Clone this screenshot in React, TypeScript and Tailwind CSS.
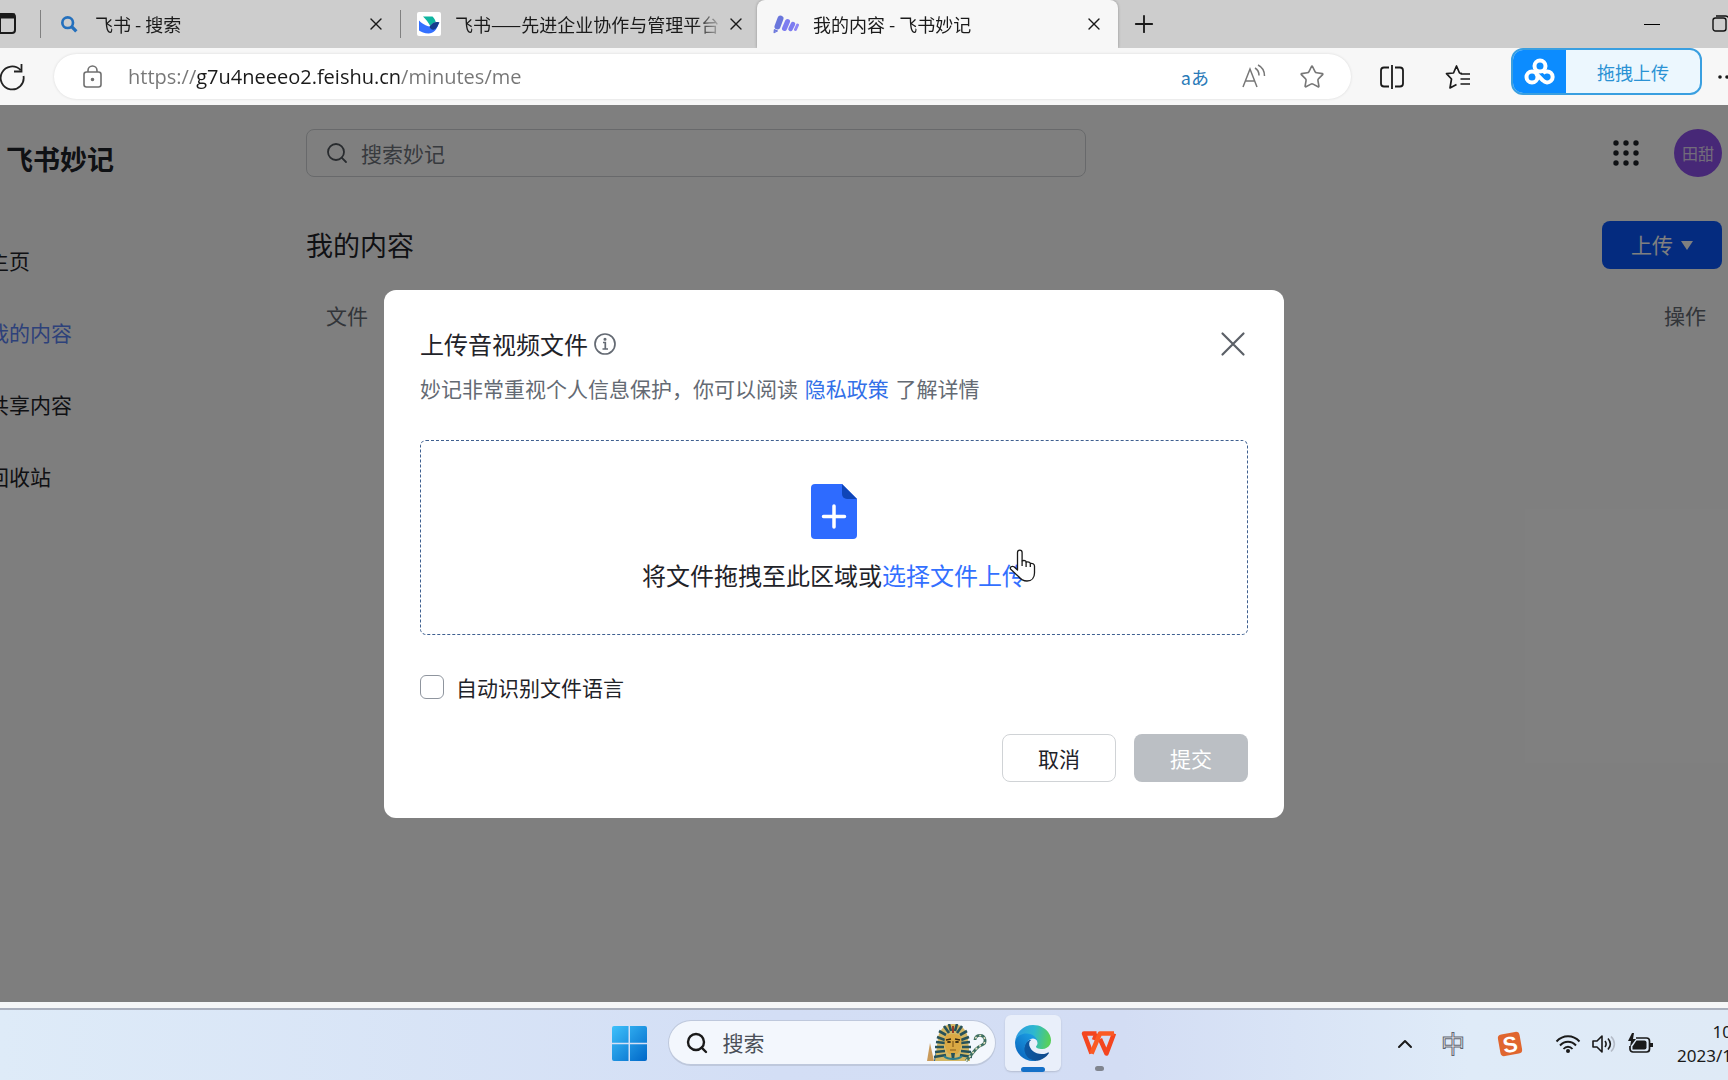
import { ReactNode, useState } from "react";
import { ChevronUp, Plus, Search, Star, X } from "lucide-react";

const NAV_ITEMS = ["主页", "我的内容", "共享内容", "回收站"];

interface ITabProps {
  title: string;
  icon: ReactNode;
  isActive?: boolean;
}

function BrowserTab({ title, icon, isActive }: ITabProps) {
  return (
    <section
      className={
        isActive
          ? "flex w-[361px] shrink-0 items-center rounded-t-lg bg-[#f7f7f7] pl-4 pr-3 shadow-[0_0_3px_rgba(0,0,0,0.3)]"
          : "flex w-[359px] shrink-0 items-center pl-4 pr-3"
      }
    >
      <button className="flex min-w-0 flex-1 items-center gap-3.5 text-left text-lg leading-6 text-[#1a1a1a]">
        {icon}
        <span className="min-w-0 flex-1 overflow-hidden whitespace-nowrap [mask-image:linear-gradient(90deg,#000_90%,transparent)]">
          {title}
        </span>
      </button>
      <button aria-label="关闭标签页" className="p-0.5">
        <X className="h-5 w-5 text-[#1a1a1a]" strokeWidth={1.6} />
      </button>
    </section>
  );
}

function TabStrip() {
  return (
    <header className="flex h-12 shrink-0 overflow-hidden bg-[#cdcdcd]">
      <button aria-label="标签操作" className="w-10 shrink-0">
        <svg viewBox="0 0 40 48" className="h-12 w-10" fill="none" stroke="#1a1a1a" strokeWidth="2">
          <rect x="-6" y="14" width="21" height="19" rx="3" />
          <path d="M-6 16h21" strokeWidth="5" />
          <path d="M0 16v17" />
        </svg>
      </button>
      <span className="my-2.5 w-px shrink-0 bg-[#808080]" />
      <BrowserTab
        title="飞书 - 搜索"
        icon={
          <svg viewBox="0 0 24 24" className="mx-1 h-4 w-4 shrink-0 overflow-visible" fill="none" stroke="#2470bd">
            <circle cx="10" cy="10" r="8" strokeWidth="4" />
            <path d="M16 16l7 7" strokeWidth="5" />
          </svg>
        }
      />
      <span className="my-2.5 w-px shrink-0 bg-[#808080]" />
      <div className="flex w-[356px] shrink-0">
        <BrowserTab
          title="飞书——先进企业协作与管理平台"
          icon={
            <svg viewBox="0 0 24 24" className="h-6 w-6 shrink-0">
              <rect width="24" height="24" rx="2" fill="#fff" />
              <path d="M6 4.500h9.500c2 2 3 4 3.300 5.800-2.500.5-4 2-5.600 3.600C11.500 10.500 9 7.500 6 4.500z" fill="#0fb5a0" />
              <path d="M2 8.500c4 4 9 6.500 14 6.500 2 0 4-1 5.500-3-2 6-5 9.500-10 9.500-4 0-7.500-1.500-9.500-3z" fill="#3370ff" />
              <path d="M12.500 14.500c2.500-3 5.500-5.500 10-4-1.500 2.500-2.500 6.500-6 7.200-2 .2-3.500-1-4-3.200z" fill="#143c8e" />
            </svg>
          }
        />
      </div>
      <BrowserTab
        isActive
        title="我的内容 - 飞书妙记"
        icon={
          <svg viewBox="0 0 26 24" className="h-6 w-[26px] shrink-0" fill="none" strokeLinecap="round">
            <path d="M4.500 14.500l3-8" stroke="#6a76dc" strokeWidth="6" />
            <path d="M11.500 16.500l3-7" stroke="#7d7cf0" strokeWidth="5" />
            <path d="M17.500 17l2.500-5" stroke="#7d7cf0" strokeWidth="4.500" />
            <path d="M22.500 17.500l2-4.500" stroke="#8f87f5" strokeWidth="3" />
            <path d="M1 20.500l.3-3 3 1.300z" fill="#6a76dc" stroke="#6a76dc" strokeWidth="1" />
          </svg>
        }
      />
      <button aria-label="新建标签页" className="ml-3">
        <Plus className="h-7 w-7 text-[#1a1a1a]" strokeWidth={1.6} />
      </button>
      <div className="ml-auto flex shrink-0 items-center">
        <button aria-label="最小化" className="p-3">
          <span className="block h-px w-4 bg-black" />
        </button>
        <button aria-label="还原" className="-mr-0.5 ml-10">
          <svg viewBox="0 0 18 18" className="h-[18px] w-[18px]" fill="none" stroke="#111" strokeWidth="1.400">
            <rect x="1" y="3" width="13" height="13" rx="2.500" />
            <path d="M4 1h9.500a3.500 3.500 0 0 1 3.500 3.500V14" />
          </svg>
        </button>
      </div>
    </header>
  );
}

function AddressBar() {
  return (
    <section className="flex h-[57px] shrink-0 items-center overflow-hidden bg-[#f7f7f7]">
      <button aria-label="刷新" className="w-[54px] shrink-0">
        <svg viewBox="0 0 54 28" className="h-7 w-[54px]" fill="none" stroke="#222" strokeWidth="1.800">
          <path d="M20.500 7A11.500 11.500 0 1 0 23.500 13M21.500 1v7.500h-7.500" />
        </svg>
      </button>

      <form className="flex h-[45px] min-w-0 flex-1 items-center rounded-full bg-white pl-7 pr-[26px] shadow-[0_0_3px_rgba(0,0,0,0.12)]">
        <svg viewBox="0 0 22 24" className="mr-6 h-6 w-[22px] shrink-0" fill="none" stroke="#707070" strokeWidth="1.600">
          <rect x="2" y="7" width="17" height="15" rx="2.500" />
          <path d="M6 7V5.500a4.500 4.500 0 0 1 9 0V7" />
          <circle cx="10.500" cy="14.500" r="1" fill="#707070" />
        </svg>
        <input
          aria-label="地址栏"
          defaultValue="https://g7u4neeeo2.feishu.cn/minutes/me"
          className="min-w-0 flex-1 bg-[linear-gradient(90deg,#767676_68px,#1a1a1a_68px,#1a1a1a_272px,#767676_272px)] bg-clip-text font-['Open_Sans',sans-serif] text-xl leading-7 text-transparent outline-none"
        />
        <button type="button" className="whitespace-nowrap text-lg leading-7 text-[#2a7ab8]">
          aあ
        </button>
        <button type="button" aria-label="朗读此页内容" className="ml-8">
          <svg viewBox="0 0 26 26" className="h-[26px] w-[26px]" fill="none" stroke="#777" strokeWidth="1.500">
            <path d="M2 23L9 5l7 18M4.500 17h9M14 4c2.500 1.500 4 4 4 7.500M17 1c4 2 6.500 6 6.500 11" />
          </svg>
        </button>
        <button type="button" aria-label="收藏此页" className="ml-8">
          <Star className="h-[26px] w-[26px] text-[#777]" strokeWidth={1.5} />
        </button>
      </form>

      <nav className="flex h-full shrink-0 items-center">
        <button aria-label="拆分屏幕" className="ml-7">
          <svg viewBox="0 0 26 26" className="h-[26px] w-[26px]" fill="none" stroke="#1a1a1a" strokeWidth="1.800">
            <path d="M10 3.500H5A3 3 0 0 0 2 6.500v13a3 3 0 0 0 3 3h5M16 3.500h5a3 3 0 0 1 3 3v13a3 3 0 0 1-3 3h-5M13 1v24" />
          </svg>
        </button>
        <button aria-label="收藏夹" className="ml-10">
          <svg viewBox="0 0 26 26" className="h-[26px] w-[26px]" fill="none" stroke="#1a1a1a" strokeWidth="1.700" strokeLinejoin="round">
            <path d="M17 9.500l-2.500-.5L11.500 2 8.500 9 1.500 9.700 6.500 15 5 24l6.500-3.500M15.500 10H25M15.500 15H25M15.500 20H25" />
          </svg>
        </button>
        <button className="ml-10 flex h-[47px] w-[191px] items-center self-start overflow-hidden rounded-xl border-2 border-[#3a9fe0] bg-[#ecf7fe] text-lg leading-6 text-[#2b92d4]">
          <span className="flex h-full w-[53px] items-center justify-center bg-[#0c8cff]">
            <svg viewBox="0 0 32 28" className="h-7 w-8" fill="none" stroke="#fff" strokeWidth="4">
              <circle cx="16" cy="8" r="5.500" />
              <circle cx="8" cy="19" r="5.500" />
              <path d="M12 15.500l7 7a5.500 5.500 0 1 0 0-7.200" />
            </svg>
          </span>
          <span className="flex-1">拖拽上传</span>
        </button>
        <button aria-label="设置及其他" className="-mr-2 ml-4">
          <svg viewBox="0 0 18 6" className="h-1.5 w-[18px]" fill="#1a1a1a">
            <circle cx="2" cy="3" r="1.800" />
            <circle cx="9" cy="3" r="1.800" />
            <circle cx="16" cy="3" r="1.800" />
          </svg>
        </button>
      </nav>
    </section>
  );
}

function Sidebar() {
  return (
    <aside className="w-[270px] shrink-0 overflow-hidden bg-[#fcfcfc] pt-9">
      <h1 className="pl-1.5 text-[27px] leading-9 font-bold text-[#1f2329]">飞书妙记</h1>
      <nav className="-ml-3 mt-12 flex flex-col">
        {NAV_ITEMS.map((item) => (
          <a
            key={item}
            href="#"
            className={
              item === "我的内容"
                ? "flex h-[72px] items-center text-[21px] text-[#5b82f5]"
                : "flex h-[72px] items-center text-[21px] text-[#1f2329]"
            }
          >
            {item}
          </a>
        ))}
      </nav>
    </aside>
  );
}

function ContentPanel() {
  return (
    <section className="min-w-0 flex-1 bg-white pl-9 pr-1.5 pt-6">
      <div className="flex items-center">
        <label className="flex h-12 w-[780px] items-center gap-3 rounded-lg border border-[#d0d3d6] pl-[18px]">
          <Search className="h-6 w-6 text-[#51565d]" strokeWidth={1.8} />
          <input
            aria-label="搜索妙记"
            placeholder="搜索妙记"
            className="min-w-0 flex-1 bg-transparent text-[21px] leading-7 outline-none placeholder:text-[#6f747c]"
          />
        </label>
        <button aria-label="应用" className="ml-auto mr-[34px]">
          <svg viewBox="0 0 28 28" className="h-7 w-7" fill="#1f2329">
            {[4, 14, 24].map((y) =>
              [4, 14, 24].map((x) => <circle key={`${x}-${y}`} cx={x} cy={y} r="2.700" />),
            )}
          </svg>
        </button>
        <button className="h-12 w-12 rounded-full bg-[#8f50ef] text-base text-[#e4d8f5]">田甜</button>
      </div>

      <div className="mt-11 flex items-center justify-between">
        <h2 className="text-[27px] leading-9 text-[#1f2329]">我的内容</h2>
        <button className="flex h-12 w-[120px] items-center justify-center gap-2 rounded-lg bg-[#0857ff] text-[21px] text-white">
          上传
          <svg viewBox="0 0 12 9" className="h-[9px] w-3" fill="currentColor">
            <path d="M0 0h12L6 9z" />
          </svg>
        </button>
      </div>

      <table className="mt-[30px] w-full text-[21px] leading-8 text-[#646a73]">
        <thead>
          <tr>
            <th className="pl-5 text-left font-normal">文件</th>
            <th className="pr-4 text-right font-normal">操作</th>
          </tr>
        </thead>
      </table>
    </section>
  );
}

function UploadDialog() {
  const [autoDetect, setAutoDetect] = useState(false);

  return (
    <section
      role="dialog"
      aria-labelledby="upload-title"
      className="w-[900px] rounded-xl bg-white px-9 pb-9 pt-9 text-[21px] leading-8 text-[#1f2329]"
    >
      <div className="flex items-center">
        <h2 id="upload-title" className="text-2xl leading-9">
          上传音视频文件
        </h2>
        <svg viewBox="0 0 24 24" className="ml-[5px] h-6 w-6" fill="none" stroke="#646a73" strokeWidth="1.700">
          <circle cx="12" cy="12" r="10" />
          <path d="M10 10.500h2.300V17M9.500 17h5.500" />
          <circle cx="12" cy="7.200" r=".7" fill="#646a73" />
        </svg>
        <button aria-label="关闭" className="ml-auto">
          <svg viewBox="0 0 30 30" className="h-[30px] w-[30px]" stroke="#5b6067" strokeWidth="2.200" strokeLinecap="round">
            <path d="M4.500 4.500l21 21M25.500 4.500l-21 21" />
          </svg>
        </button>
      </div>
      <p className="mt-2.5 text-[#646a73]">
        妙记非常重视个人信息保护，你可以阅读{" "}
        <a href="#" className="mx-0.5 text-[#3370e8]">
          隐私政策
        </a>{" "}
        了解详情
      </p>

      <div className="mt-9 flex h-[195px] flex-col items-center rounded-md border border-dashed border-[#3f6090] pt-[43px]">
        <svg viewBox="0 0 46 55" className="h-[55px] w-[46px]">
          <path d="M4 0h27l15 15v36a4 4 0 0 1-4 4H4a4 4 0 0 1-4-4V4a4 4 0 0 1 4-4z" fill="#2e6bff" />
          <path d="M31 0l15 15H36a5 5 0 0 1-5-5z" fill="#0f45b8" />
          <path d="M23 22v21M12.500 32.500h21" stroke="#fff" strokeWidth="3.500" strokeLinecap="round" />
        </svg>
        <p className="mt-[18px] flex text-2xl leading-9">
          将文件拖拽至此区域或
          <button className="relative cursor-pointer text-[#3370ff]">
            选择文件上传
            <svg
              viewBox="0 0 27 34"
              className="absolute -right-2.5 -top-2 h-[34px] w-[27px]"
              fill="#fff"
              stroke="#1a1a1a"
              strokeWidth="1.300"
              strokeLinejoin="round"
            >
              <path d="M8.500 21V3.500a2.300 2.300 0 0 1 4.600 0v8.300c2-.8 4 .2 4 1.200 2-.5 4 .3 4.200 1.400 2-.4 4.200.6 4.200 2.600v7c0 4.500-2.500 8-7.500 8-4 0-6.200-1.500-8.500-4.500L1.500 20c-1-1.700 1.500-3.500 3.500-2.200z" />
              <path d="M13.100 11.800V17M17.100 13v5M21.300 14.400V18" fill="none" />
            </svg>
          </button>
        </p>
      </div>

      <label className="mt-9 flex items-center gap-3">
        <input
          type="checkbox"
          checked={autoDetect}
          onChange={(e) => setAutoDetect(e.target.checked)}
          className="h-6 w-6 appearance-none rounded-md border border-[#8f959e] bg-white checked:bg-[#3370ff]"
        />
        自动识别文件语言
      </label>

      <div className="mt-[31px] flex justify-end gap-[18px]">
        <button className="h-12 w-[114px] rounded-lg border border-[#d0d3d6]">取消</button>
        <button className="h-12 w-[114px] rounded-lg bg-[#bbbfc4] text-white">提交</button>
      </div>
    </section>
  );
}

function EdgeLogo() {
  return (
    <svg viewBox="0 0 256 256" className="h-9 w-9">
      <defs>
        <linearGradient id="edge-deep" x1="60" y1="180" x2="240" y2="180" gradientUnits="userSpaceOnUse">
          <stop stopColor="#0c59a4" />
          <stop offset="1" stopColor="#114a8b" />
        </linearGradient>
        <linearGradient id="edge-mid" x1="150" y1="90" x2="45" y2="210" gradientUnits="userSpaceOnUse">
          <stop stopColor="#1b9de2" />
          <stop offset="1" stopColor="#0e6fc4" />
        </linearGradient>
        <linearGradient id="edge-top" x1="20" y1="70" x2="240" y2="110" gradientUnits="userSpaceOnUse">
          <stop stopColor="#2c9fe0" />
          <stop offset=".5" stopColor="#2db8cf" />
          <stop offset="1" stopColor="#58d05c" />
        </linearGradient>
      </defs>
      <path
        fill="url(#edge-deep)"
        d="M235.680 195.460a93.730 93.730 0 0 1-10.540 4.710 101.870 101.870 0 0 1-35.900 6.460c-47.320 0-88.540-32.550-88.540-74.320A31.480 31.480 0 0 1 117.130 105c-42.800 1.800-53.800 46.400-53.800 72.530 0 73.880 68.090 78.470 82.760 78.470 7.910 0 19.840-2.300 27-4.560l1.310-.44a128.340 128.340 0 0 0 66.600-49.900 4 4 0 0 0-5.320-5.640z"
      />
      <path
        fill="url(#edge-mid)"
        d="M105.730 241.420A79.200 79.200 0 0 1 83 220.080a80.720 80.720 0 0 1 29.500-120.770c3.120-1.470 8.450-4.130 15.540-4a32.350 32.350 0 0 1 25.690 13 31.880 31.880 0 0 1 6.360 18.660c0-.21 24.460-79.600-80-79.600-43.900 0-80 41.660-80 78.210a130.150 130.150 0 0 0 12.110 56 128 128 0 0 0 156.380 67.110 75.550 75.550 0 0 1-62.780-8z"
      />
      <path
        fill="url(#edge-top)"
        d="M152.330 148.860c-.81 1-3.300 2.500-3.300 5.660 0 2.610 1.700 5.120 4.720 7.230 14.380 10 41.490 8.680 41.560 8.680a59.560 59.560 0 0 0 30.270-8.350 61.380 61.380 0 0 0 30.430-52.880c.26-22.410-8-37.310-11.340-43.910C223.460 23.780 177.720 0 128 0A128 128 0 0 0 0 126.200c.48-36.540 36.800-66.050 80-66.050 3.500 0 23.460.34 42 10.070 16.340 8.580 24.900 18.940 30.850 29.210 6.180 10.670 7.280 24.150 7.280 29.520s-2.740 13.330-7.800 19.910z"
      />
    </svg>
  );
}

// golden mask with striped headdress, next to a shepherd's crook
function PharaohArt() {
  return (
    <svg viewBox="0 0 60 38" className="h-[38px] w-[60px]" fill="none">
      <path d="M3 19l4 18H0z" fill="#c99a5a" />
      <path d="M7 37l2-10 6 10z" fill="#1f5f8a" />
      <path d="M26 0c8 0 14 6 15 14l2 23H8l3-23C12 6 18 0 26 0z" fill="#d3b765" />
      <path
        d="M12 7l7 4M10 13l8 3M9 18l9 1M8 23l9 0M8 28l10-1M7 33l12-2M40 7l-7 4M42 13l-8 3M43 18l-9 1M44 23l-9 0M44 28l-10-1M45 33l-12-2M17 2l5 7M35 2l-5 7M22 0l2 7M30 0l-2 7"
        stroke="#27525a"
        strokeWidth="2.600"
      />
      <path d="M18 13c2-4 14-4 16 0 1 7 0 13-4 17h-8c-4-4-5-10-4-17z" fill="#dba944" />
      <path d="M19 16l5-1M28 15l5 1" stroke="#3a2c14" strokeWidth="1.300" />
      <ellipse cx="22" cy="18" rx="2" ry="1" fill="#3a2c14" />
      <ellipse cx="30" cy="18" rx="2" ry="1" fill="#3a2c14" />
      <path d="M26 17v6M23 26h6" stroke="#8a5f1c" strokeWidth="1.200" />
      <path d="M24 29h4l-1 7h-2z" fill="#27525a" />
      <path d="M26 2v7" stroke="#9a3d24" strokeWidth="2" />
      <path d="M17 32c4 4 14 4 18 0" stroke="#2f7d8a" strokeWidth="2" />
      <path d="M39 37l10-12c2-2 3-3 6-4a5 5 0 1 0-7-5" stroke="#3e6f61" strokeWidth="2.800" />
      <path d="M39 37l10-12c2-2 3-3 6-4a5 5 0 1 0-7-5" stroke="#e6e2c0" strokeWidth="1.600" strokeDasharray="2 3" />
    </svg>
  );
}

function Taskbar() {
  return (
    <footer className="grid h-[70px] shrink-0 grid-cols-[1fr_auto_1fr] items-center bg-[linear-gradient(90deg,#deebf8_0%,#d3def5_45%,#d3ddf4_65%,#dfebf8_85%,#dfeaf6_100%)] font-['Noto_Sans','Noto_Sans_CJK_SC',sans-serif] text-[#1a1a1a]">
      <span />
      <div className="flex items-center pb-1 pl-2.5">
        <button aria-label="开始" className="mr-[21px]">
          <svg viewBox="0 0 35 35" className="h-[35px] w-[35px]">
            <defs>
              <linearGradient id="start-blue" x1="0" y1="0" x2="35" y2="35" gradientUnits="userSpaceOnUse">
                <stop stopColor="#3ec1fb" />
                <stop offset="1" stopColor="#0067c8" />
              </linearGradient>
            </defs>
            <path
              d="M2 0h14.500v16.800H0V2a2 2 0 0 1 2-2zM18 0h15a2 2 0 0 1 2 2v14.800H18zM0 18.200h16.500V35H2a2 2 0 0 1-2-2zM18 18.200h17V33a2 2 0 0 1-2 2H18z"
              fill="url(#start-blue)"
            />
          </svg>
        </button>
        <label className="flex h-[46px] w-[328px] items-center rounded-full border border-b-2 border-[#bec8dc] bg-[#f3f7fd] pl-4 pr-2">
          <Search className="h-6 w-6 shrink-0" strokeWidth={2.4} />
          <input
            aria-label="搜索"
            placeholder="搜索"
            className="ml-3.5 min-w-0 flex-1 bg-transparent text-[21px] leading-7 outline-none placeholder:text-[#4a4f58]"
          />
          <PharaohArt />
        </label>
        <button
          aria-label="Microsoft Edge"
          className="relative ml-[9px] flex h-14 w-14 items-center justify-center rounded-md bg-[#e9effa] shadow-[0_1px_2px_rgba(0,0,0,0.15)]"
        >
          <EdgeLogo />
          <span className="absolute -bottom-px left-4 h-[5px] w-6 rounded-full bg-[#1470c8]" />
        </button>
        <button aria-label="WPS Office" className="relative ml-2.5 flex h-14 w-14 items-center justify-center">
          <svg viewBox="0 0 36 25" className="h-[25px] w-9" fill="none" strokeWidth="4.500" strokeLinejoin="round">
            <path d="M33 2.500l-7.500 20L19 8" stroke="#f4451f" />
            <path d="M15.500 2.500H3l7.500 20" stroke="#f4451f" />
            <path d="M15.500 2.500L13 9" stroke="#f4451f" />
            <path d="M10.500 22.500L19 2.500h14" stroke="#fb5a24" />
          </svg>
          <span className="absolute bottom-0 left-6 h-[5px] w-[9px] rounded-full bg-[#80858f]" />
        </button>
      </div>

      <div className="flex items-center justify-end overflow-hidden pb-0.5">
        <button aria-label="显示隐藏的图标">
          <ChevronUp className="h-6 w-6" strokeWidth={2} />
        </button>
        <button className="ml-6 text-2xl leading-9 text-white [-webkit-text-stroke:1px_#5f6672]">中</button>
        <button aria-label="搜狗输入法" className="ml-8">
          <svg viewBox="0 0 26 26" className="h-[26px] w-[26px]">
            <g transform="rotate(-10 13 13)">
              <rect x="2" y="2" width="22" height="22" rx="4" fill="#e0662f" />
              <text x="13" y="21" textAnchor="middle" fill="#fff" fontSize="22" fontWeight="700" fontFamily="Liberation Sans">
                S
              </text>
            </g>
          </svg>
        </button>
        <button aria-label="网络和音量" className="ml-8 flex items-center gap-2.5">
          <svg viewBox="0 0 26 20" className="h-5 w-[26px]" fill="none" stroke="currentColor" strokeWidth="1.900">
            <path d="M1.500 7.500c6.500-7 16.500-7 23 0M5 11.500c4.500-5 11.500-5 16 0M8.500 15c2.500-3 6.500-3 9 0" />
            <circle cx="13" cy="17" r="2" fill="currentColor" stroke="none" />
          </svg>
          <svg viewBox="0 0 26 20" className="h-5 w-[26px]" fill="none" stroke="currentColor" strokeWidth="1.600" strokeLinejoin="round">
            <path d="M2 7h4l5-5v16l-5-5H2zM14 7c1.500 2 1.500 4 0 6M17 4.500c3 3.500 3 7.500 0 11" />
            <path d="M20 2.500c4.500 4.500 4.500 10.500 0 15" stroke="#b5bcc8" />
          </svg>
          <svg viewBox="0 0 26 22" className="h-[22px] w-[26px]" fill="none" stroke="currentColor" strokeWidth="1.700">
            <path d="M9 5h10.500a3 3 0 0 1 3 3v8a3 3 0 0 1-3 3H6a3 3 0 0 1-3-3v-3" />
            <path d="M9.500 7.500h8a2 2 0 0 1 2 2v5a2 2 0 0 1-2 2H5.500v-3z" fill="currentColor" stroke="none" />
            <path d="M5 0L1 8h3l-1 6 6-8H6l1-6zM23 10h3v4h-3z" fill="currentColor" stroke="none" />
          </svg>
        </button>
        <time className="-mr-1 ml-6 flex flex-col items-end text-[17px] leading-6">
          <span>10</span>
          <span>2023/1</span>
        </time>
      </div>
    </footer>
  );
}

export default function App() {
  return (
    <div className="flex h-screen flex-col overflow-hidden bg-white font-['Noto_Sans_CJK_SC',sans-serif]">
      <TabStrip />
      <AddressBar />
      <main className="relative flex min-h-0 flex-1">
        <Sidebar />
        <ContentPanel />
        <div className="absolute inset-0 flex items-center justify-center bg-black/50 pr-[60px]">
          <UploadDialog />
        </div>
      </main>
      <div className="h-2 shrink-0 border-b-2 border-[#aab0bd] bg-[#f5f6f7]" />
      <Taskbar />
    </div>
  );
}
